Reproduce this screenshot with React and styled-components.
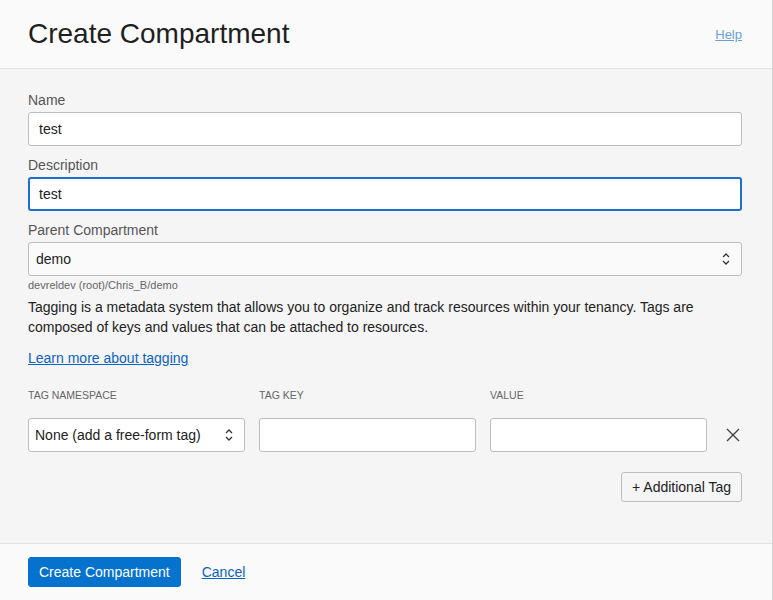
import React from "react";
import styled, { createGlobalStyle } from "styled-components";

const G = createGlobalStyle`
  body { margin:0; font-family:"Liberation Sans", Arial, sans-serif; color:#161513; }
  * { box-sizing:border-box; }
`;
const Page = styled.div`width:773px;height:600px;display:flex;flex-direction:column;border-right:1px solid #d4d4d4;background:#f5f5f5;`;
const Header = styled.div`height:69px;flex:none;background:#fafafa;border-bottom:1px solid #e2e2e2;display:flex;align-items:center;justify-content:space-between;padding:0 30px 0 28px;`;
const Title = styled.h1`margin:0;font-weight:400;font-size:28px;color:#1f1f1f;`;
const Link = styled.a`color:${p=>p.$light?"#6a9fd8":"#0b62c4"};text-decoration:underline;font-size:${p=>p.$size||14}px;cursor:pointer;`;
const Body = styled.div`flex:1;padding:23px 30px 0 28px;display:flex;flex-direction:column;`;
const Label = styled.label`font-size:14px;color:#555;line-height:17px;margin-bottom:3px;`;
const Field = styled.div`display:flex;flex-direction:column;margin-bottom:${p=>p.$mb??11}px;`;
const Input = styled.div`height:${p=>p.$h||34}px;background:${p=>p.$bg||"#fff"};border:${p=>p.$focus?"2px solid #1a6fcf":"1px solid #bdbdbd"};border-radius:3px;display:flex;align-items:center;justify-content:space-between;padding:0 ${p=>p.$focus?9:10}px 0 ${p=>p.$pl||(p.$focus?9:10)}px;font-size:14px;color:#222;`;
const Hint = styled.div`font-size:11px;color:#666;margin-top:3px;`;
const Para = styled.p`font-size:14px;line-height:20px;margin:6px 0 12px;color:#222;`;
const TagGrid = styled.div`display:grid;grid-template-columns:217px 217px 217px 1fr;column-gap:14px;margin-top:22px;align-items:center;`;
const TagHead = styled.div`font-size:10.5px;color:#666;text-transform:uppercase;margin-bottom:17px;`;
const Close = styled.div`justify-self:end;padding-right:2px;display:flex;`;
const Right = styled.div`display:flex;justify-content:flex-end;margin-top:20px;`;
const Btn = styled.button`font-family:inherit;font-size:14px;height:30px;padding:0 10px;border-radius:3px;border:1px solid ${p=>p.$primary?"#0572ce":"#bdbdbd"};background:${p=>p.$primary?"#0572ce":"#f5f5f5"};color:${p=>p.$primary?"#fff":"#222"};`;
const Footer = styled.div`height:57px;flex:none;background:#fafafa;border-top:1px solid #e2e2e2;display:flex;align-items:center;gap:21px;padding:0 28px;`;

const Chev = () => (
  <svg width="10" height="16" viewBox="0 0 10 16"><path d="M2 6l3-3 3 3M2 10l3 3 3-3" stroke="#333" strokeWidth="1.3" fill="none"/></svg>
);

export default function App(){
  return (<><G/><Page>
    <Header><Title>Create Compartment</Title><Link $light $size={13}>Help</Link></Header>
    <Body>
      <Field><Label>Name</Label><Input>test</Input></Field>
      <Field><Label>Description</Label><Input $focus>test</Input></Field>
      <Field $mb={0}><Label>Parent Compartment</Label><Input $bg="#fafafa" $pl={7}>demo<Chev/></Input><Hint>devreldev (root)/Chris_B/demo</Hint></Field>
      <Para>Tagging is a metadata system that allows you to organize and track resources within your tenancy. Tags are composed of keys and values that can be attached to resources.</Para>
      <div><Link>Learn more about tagging</Link></div>
      <TagGrid>
        <TagHead>Tag Namespace</TagHead><TagHead>Tag Key</TagHead><TagHead>Value</TagHead><div/>
        <Input $pl={6}>None (add a free-form tag)<Chev/></Input><Input/><Input/>
        <Close><svg width="14" height="14" viewBox="0 0 14 14"><path d="M1 1l12 12M13 1L1 13" stroke="#444" strokeWidth="1.4"/></svg></Close>
      </TagGrid>
      <Right><Btn>+ Additional Tag</Btn></Right>
    </Body>
    <Footer><Btn $primary>Create Compartment</Btn><Link>Cancel</Link></Footer>
  </Page></>);
}
